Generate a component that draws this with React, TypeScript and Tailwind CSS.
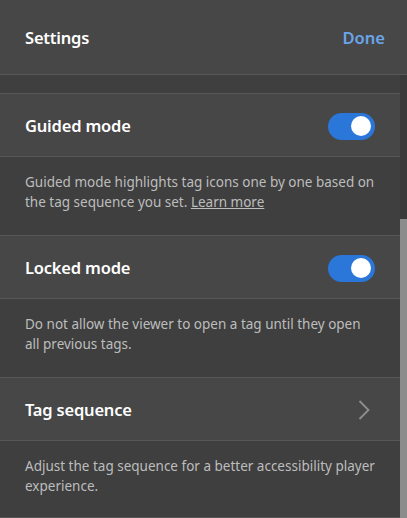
function Toggle() {
  return (
    <div className="w-[47px] h-[27px] rounded-full bg-[#2a77d9] flex items-center justify-end pr-[4px]">
      <div className="w-[20px] h-[20px] rounded-full bg-white" />
    </div>
  );
}

function Row({ title, right }: { title: string; right: React.ReactNode }) {
  return (
    <div className="h-[63px] flex items-center justify-between pl-[25px] pr-[25px] pt-[2px] bg-[#474747] border-b border-[#575757]">
      <span className="text-[16.5px] font-semibold text-white tracking-[-0.2px]">{title}</span>
      {right}
    </div>
  );
}

function Desc({ children, h }: { children: React.ReactNode; h: string }) {
  return (
    <div className={`${h} bg-[#3f3f3f] border-b border-[#575757] pl-[25px] pr-[23px] pt-[15px] text-[13.5px] leading-[20px] text-[#bdbdbd]`}>
      {children}
    </div>
  );
}

export default function App() {
  return (
    <div
      className="w-[407px] h-[518px] overflow-hidden bg-[#3f3f3f] flex flex-col"
      style={{ fontFamily: '"Noto Sans", "Open Sans", sans-serif' }}
    >
      <div className="h-[75px] shrink-0 flex items-center justify-between pl-[25px] pr-[22px] pt-[3px] bg-[#474747] border-b border-[#575757]">
        <span className="text-[16.5px] font-semibold text-white tracking-[-0.2px]">Settings</span>
        <span className="text-[16.5px] font-semibold text-[#6aa5ea]">Done</span>
      </div>
      <div className="flex flex-1 min-h-0">
        <div className="flex-1 flex flex-col">
          <div className="h-[19px] bg-[#3f3f3f] border-b border-[#575757]" />
          <Row title="Guided mode" right={<Toggle />} />
          <Desc h="h-[79px]">
            Guided mode highlights tag icons one by one based on the tag sequence you set.{" "}
            <span className="underline">Learn more</span>
          </Desc>
          <Row title="Locked mode" right={<Toggle />} />
          <Desc h="h-[79px]">
            Do not allow the viewer to open a tag until they open all previous tags.
          </Desc>
          <Row
            title="Tag sequence"
            right={
              <svg width="12" height="20" viewBox="0 0 12 20" className="mr-[5px]">
                <path d="M1.5 1 L10.5 10 L1.5 19" fill="none" stroke="#8f8f8f" strokeWidth="1.8" />
              </svg>
            }
          />
          <Desc h="flex-1">
            Adjust the tag sequence for a better accessibility player experience.
          </Desc>
        </div>
        <div className="w-[7px] flex flex-col bg-[#3a3a3a]">
          <div className="h-[144px]" />
          <div className="flex-1 bg-[#8c8c8c]" />
        </div>
      </div>
    </div>
  );
}
